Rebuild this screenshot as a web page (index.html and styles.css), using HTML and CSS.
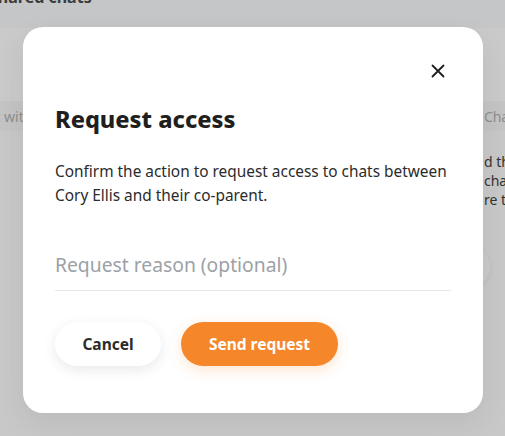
FILE: index.html
```html
<!DOCTYPE html>
<html>
<head>
<meta charset="utf-8">
<link rel="stylesheet" href="styles.css">
</head>
<body>
<div class="page">
  <div class="topbar"><h2 class="page-title">Shared chats</h2></div>
  <div class="band"></div>
  <div class="strip">
    <span class="strip-left">Chat with</span>
    <span class="strip-right">Chats</span>
  </div>
  <div class="content">
    <div class="side-text">
      <p>d the</p>
      <p>chats</p>
      <p>re the</p>
    </div>
    <div class="side-pill"></div>
  </div>
</div>

<div class="modal" role="dialog">
  <div class="modal-head">
    <button class="close" aria-label="Close">
      <svg width="14" height="14" viewBox="0 0 14 14"><path d="M1.5 1.5 L12.5 12.5 M12.5 1.5 L1.5 12.5" stroke="#1e1e1e" stroke-width="1.8" stroke-linecap="round"/></svg>
    </button>
  </div>
  <h1 class="modal-title">Request access</h1>
  <p class="modal-text">Confirm the action to request access to chats between Cory Ellis and their co-parent.</p>
  <div class="field">
    <input class="reason" type="text" placeholder="Request reason (optional)">
  </div>
  <div class="actions">
    <button class="btn btn-cancel">Cancel</button>
    <button class="btn btn-send">Send request</button>
  </div>
</div>
</body>
</html>
```

FILE: styles.css
```css
html, body {
  margin: 0;
  padding: 0;
  width: 505px;
  height: 436px;
  overflow: hidden;
  background: #c8c8c8;
  font-family: "Noto Sans", "Lato", sans-serif;
}
.page {
  display: flex;
  flex-direction: column;
  width: 505px;
  height: 436px;
}
.topbar {
  height: 28px;
  background: #c5c6c7;
  overflow: hidden;
}
.page-title {
  margin: -13px 0 0 -11px;
  font-size: 16px;
  font-weight: 700;
  color: #3a3b3c;
  line-height: 20px;
}
.band {
  height: 73px;
  background: #cacaca;
}
.strip {
  height: 30px;
  background: #c4c4c4;
  display: flex;
  justify-content: space-between;
  align-items: center;
  font-size: 14px;
  color: #8e8e8e;
  overflow: hidden;
}
.strip-left { margin-left: -30px; }
.strip-right { margin-right: -16px; }
.content {
  flex: 1;
  display: flex;
  flex-direction: column;
  align-items: flex-end;
  background: #c8c8c8;
}
.side-text {
  width: 21px;
  overflow: hidden;
  white-space: nowrap;
  margin-top: 21px;
  font-size: 14px;
  line-height: 19px;
  color: #333;
}
.side-text p { margin: 0; }
.side-pill {
  width: 60px;
  height: 40px;
  margin-top: 38px;
  margin-right: 15px;
  border-radius: 20px;
  background: #cacaca;
  box-shadow: 0 2px 6px rgba(0,0,0,0.06);
}

.modal {
  position: absolute;
  left: 23px;
  top: 27px;
  width: 460px;
  height: 386px;
  box-sizing: border-box;
  padding: 32px 32px 47px 32px;
  background: #fff;
  border-radius: 20px;
  box-shadow: 0 10px 30px rgba(0,0,0,0.07);
  display: flex;
  flex-direction: column;
}
.modal-head {
  display: flex;
  justify-content: flex-end;
  height: 24px;
}
.close {
  width: 24px;
  height: 24px;
  padding: 0;
  margin-right: 1px;
  border: 0;
  background: none;
  display: flex;
  align-items: center;
  justify-content: center;
}
.modal-title {
  margin: 21px 0 0 0;
  font-size: 23.5px;
  line-height: 30px;
  font-weight: 800;
  color: #1f1f1f;
}
.modal-text {
  margin: 26px 0 0 0;
  font-size: 15.4px;
  line-height: 24px;
  color: #2b2b2b;
  width: 400px;
}
.field {
  margin-top: 33px;
  width: 396px;
  border-bottom: 1px solid #e6e8ea;
}
.reason {
  display: block;
  box-sizing: border-box;
  width: 100%;
  height: 49px;
  border: 0;
  outline: 0;
  padding: 0 0 2px 0;
  font-family: inherit;
  font-size: 19.3px;
  color: #2b2b2b;
  background: transparent;
}
.reason::placeholder { color: #9ca1a6; }
.actions {
  margin-top: 31px;
  display: flex;
  gap: 20px;
}
.btn {
  height: 44px;
  border: 0;
  border-radius: 22px;
  font-family: inherit;
  font-size: 15.5px;
  font-weight: 700;
  padding: 0;
}
.btn-cancel {
  width: 106px;
  background: #fff;
  color: #2b2b2b;
  box-shadow: 0 4px 14px rgba(0,0,0,0.09);
}
.btn-send {
  width: 157px;
  background: #f5872a;
  color: #fff;
  box-shadow: 0 4px 14px rgba(245,135,42,0.22);
}
```
